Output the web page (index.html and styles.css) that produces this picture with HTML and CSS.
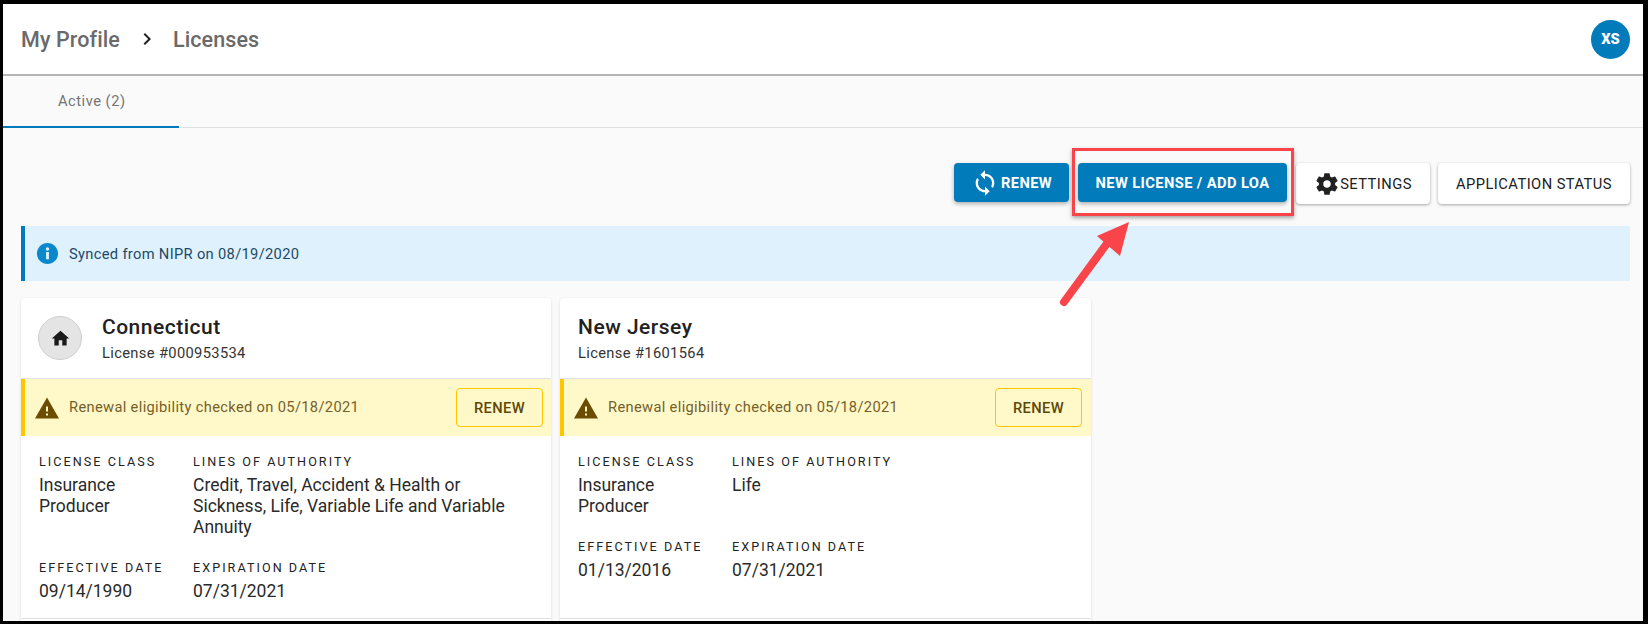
FILE: index.html
```html
<!DOCTYPE html>
<html lang="en">
<head>
<meta charset="utf-8">
<title>Licenses</title>
<link rel="stylesheet" href="styles.css">
</head>
<body>
<div class="frame">
  <header class="topbar">
    <div class="crumbs">
      <span class="crumb">My Profile</span>
      <svg class="crumb-sep" viewBox="0 0 24 24"><path d="M10 6L8.59 7.41 13.17 12l-4.58 4.59L10 18l6-6z"/></svg>
      <span class="crumb">Licenses</span>
    </div>
    <div class="avatar">XS</div>
  </header>
  <nav class="tabs">
    <div class="tab">Active (2)</div>
  </nav>
  <main class="content">
    <div class="actions">
      <button class="btn btn-primary btn-renew">
        <svg class="sync" viewBox="0 0 24 24"><path d="M12 4V1L8 5l4 4V6c3.31 0 6 2.69 6 6 0 1.01-.25 1.97-.7 2.8l1.46 1.46C19.54 15.03 20 13.57 20 12c0-4.42-3.58-8-8-8zm0 14c-3.31 0-6-2.69-6-6 0-1.01.25-1.97.7-2.8L5.24 7.74C4.46 8.97 4 10.43 4 12c0 4.42 3.58 8 8 8v3l4-4-4-4v3z"/></svg>
        RENEW
      </button>
      <button class="btn btn-primary btn-new">NEW LICENSE / ADD LOA</button>
      <button class="btn btn-plain btn-settings">
        <svg class="gear" viewBox="0 0 24 24"><path d="M19.43 12.98c.04-.32.07-.64.07-.98s-.03-.66-.07-.98l2.11-1.65c.19-.15.24-.42.12-.64l-2-3.46c-.12-.22-.39-.3-.61-.22l-2.49 1c-.52-.4-1.08-.73-1.69-.98l-.38-2.65C14.46 2.18 14.25 2 14 2h-4c-.25 0-.46.18-.49.42l-.38 2.65c-.61.25-1.17.59-1.69.98l-2.49-1c-.23-.09-.49 0-.61.22l-2 3.46c-.13.22-.07.49.12.64l2.11 1.65c-.04.32-.07.65-.07.98s.03.66.07.98l-2.11 1.65c-.19.15-.24.42-.12.64l2 3.46c.12.22.39.3.61.22l2.49-1c.52.4 1.08.73 1.69.98l.38 2.65c.03.24.24.42.49.42h4c.25 0 .46-.18.49-.42l.38-2.65c.61-.25 1.17-.59 1.69-.98l2.49 1c.23.09.49 0 .61-.22l2-3.46c.12-.22.07-.49-.12-.64l-2.11-1.65zM12 15.5c-1.93 0-3.5-1.57-3.5-3.5s1.57-3.5 3.5-3.5 3.5 1.57 3.5 3.5-1.57 3.5-3.5 3.5z"/></svg>
        SETTINGS
      </button>
      <button class="btn btn-plain btn-status">APPLICATION STATUS</button>
    </div>

    <div class="info-banner">
      <svg class="info-icon" viewBox="0 0 24 24"><path d="M12 1C5.92 1 1 5.92 1 12s4.92 11 11 11 11-4.92 11-11S18.08 1 12 1zm1.5 17h-3v-7.500h3V18zM12 9a1.800 1.800 0 1 1 0-3.600A1.800 1.800 0 0 1 12 9z"/></svg>
      <span>Synced from NIPR on 08/19/2020</span>
    </div>

    <div class="cards">
      <article class="card">
        <div class="card-head">
          <div class="home-badge">
            <svg class="home" viewBox="0 0 24 24"><path d="M10 20v-6h4v6h5v-8h3L12 3 2 12h3v8z"/></svg>
          </div>
          <div>
            <h2 class="state">Connecticut</h2>
            <div class="license-no">License #000953534</div>
          </div>
        </div>
        <div class="warn">
          <svg class="warn-icon" viewBox="0 0 24 24"><path d="M0 22.500h24L12 1.500 0 22.500zm13-3h-2v-2h2v2zm0-4h-2v-5h2v5z"/></svg>
          <span class="warn-text">Renewal eligibility checked on 05/18/2021</span>
          <button class="btn-outline">RENEW</button>
        </div>
        <div class="card-body">
          <div class="field">
            <div class="label">LICENSE CLASS</div>
            <div class="value">Insurance Producer</div>
          </div>
          <div class="field">
            <div class="label">LINES OF AUTHORITY</div>
            <div class="value">Credit, Travel, Accident &amp; Health or Sickness, Life, Variable Life and Variable Annuity</div>
          </div>
          <div class="field">
            <div class="label">EFFECTIVE DATE</div>
            <div class="value">09/14/1990</div>
          </div>
          <div class="field">
            <div class="label">EXPIRATION DATE</div>
            <div class="value">07/31/2021</div>
          </div>
        </div>
        <div class="card-foot"></div>
      </article>

      <article class="card">
        <div class="card-head">
          <div>
            <h2 class="state">New Jersey</h2>
            <div class="license-no">License #1601564</div>
          </div>
        </div>
        <div class="warn">
          <svg class="warn-icon" viewBox="0 0 24 24"><path d="M0 22.500h24L12 1.500 0 22.500zm13-3h-2v-2h2v2zm0-4h-2v-5h2v5z"/></svg>
          <span class="warn-text">Renewal eligibility checked on 05/18/2021</span>
          <button class="btn-outline">RENEW</button>
        </div>
        <div class="card-body">
          <div class="field">
            <div class="label">LICENSE CLASS</div>
            <div class="value">Insurance Producer</div>
          </div>
          <div class="field">
            <div class="label">LINES OF AUTHORITY</div>
            <div class="value">Life</div>
          </div>
          <div class="field">
            <div class="label">EFFECTIVE DATE</div>
            <div class="value">01/13/2016</div>
          </div>
          <div class="field">
            <div class="label">EXPIRATION DATE</div>
            <div class="value">07/31/2021</div>
          </div>
        </div>
        <div class="card-foot"></div>
      </article>
    </div>
  </main>

  <div class="callout-box"></div>
  <svg class="callout-arrow" viewBox="0 0 80 90">
    <line x1="6" y1="84" x2="53" y2="20" />
    <polygon points="71,4 62,38 39,18" />
  </svg>
</div>
</body>
</html>
```

FILE: styles.css
```css
* { box-sizing: border-box; }

html, body {
  margin: 0;
  height: 100%;
  background: #000;
  overflow: hidden;
}

.frame {
  position: absolute;
  left: 3px;
  top: 4px;
  width: 1640px;
  height: 617px;
  background: #fafafa;
  overflow: hidden;
  font-family: Roboto, "Liberation Sans", sans-serif;
  color: #212121;
}

/* top bar */
.topbar {
  display: flex;
  align-items: center;
  justify-content: space-between;
  height: 72px;
  padding: 0 13px 0 18px;
  background: #fff;
  border-bottom: 2px solid #b5b5b5;
}

.crumbs {
  display: flex;
  align-items: center;
  color: #6a6a6a;
}

.crumb {
  font-size: 21.5px;
  font-weight: 500;
  letter-spacing: 0.1px;
}

.crumb-sep {
  width: 24px;
  height: 24px;
  margin: 0 14.5px;
  fill: #212121;
}

.avatar {
  width: 39px;
  height: 39px;
  border-radius: 50%;
  background: #017bba;
  color: #fff;
  font-size: 14.7px;
  font-weight: 900;
  display: flex;
  align-items: center;
  justify-content: center;
}

/* tabs */
.tabs {
  height: 52px;
  border-bottom: 1px solid #e0e0e0;
}

.tab {
  width: 176px;
  height: 52px;
  padding: 15px 0 0 55px;
  font-size: 14.7px;
  line-height: 20px;
  letter-spacing: 0.5px;
  color: #757575;
  border-bottom: 2px solid #017bba;
}

/* page body */
.content {
  padding: 35px 13px 0 18px;
}

.actions {
  display: flex;
  justify-content: flex-end;
  align-items: flex-start;
  gap: 9px;
}

.btn {
  display: flex;
  align-items: center;
  justify-content: center;
  border: 0;
  border-radius: 4px;
  font-family: inherit;
  font-size: 14.7px;
  font-weight: 500;
  letter-spacing: 0.4px;
  padding: 0;
}

.btn-primary {
  height: 39px;
  background: #017bba;
  color: #fff;
  font-weight: 700;
  box-shadow: 0 2px 4px rgba(0, 0, 0, .3);
}

.btn-plain {
  height: 41px;
  background: #fff;
  color: #212121;
  font-weight: 400;
  letter-spacing: 0.45px;
  box-shadow: 0 1px 3px rgba(0, 0, 0, .35);
}

.btn-renew { width: 115px; gap: 2px; }
.btn-new { width: 209px; }
.btn-settings { width: 134px; }
.btn-status { width: 192px; margin-left: -1px; }

.sync {
  width: 28px;
  height: 28px;
  fill: #fff;
}

.gear {
  width: 26px;
  height: 26px;
  fill: #212121;
}

/* banner */
.info-banner {
  display: flex;
  align-items: center;
  height: 55px;
  margin-top: 22px;
  padding-left: 11px;
  background: #dff1fd;
  border-left: 4px solid #017bba;
  color: #1c4a66;
  font-size: 14.7px;
  letter-spacing: 0.32px;
}

.info-icon {
  width: 23px;
  height: 23px;
  margin-right: 10px;
  fill: #0a88cc;
}

/* cards */
.cards {
  display: flex;
  gap: 9px;
  margin-top: 17px;
}

.card {
  display: flex;
  flex-direction: column;
  width: 530px;
  background: #fff;
  border-radius: 4px 4px 0 0;
  box-shadow: 0 1px 3px rgba(0, 0, 0, .12);
}

.card + .card { width: 531px; }
.card + .card .warn { padding-right: 9px; }

.card-head {
  display: flex;
  align-items: center;
  height: 81px;
  padding: 0 18px;
  border-bottom: 1px solid #e0e0e8;
}

.home-badge {
  display: flex;
  align-items: center;
  justify-content: center;
  width: 44px;
  height: 44px;
  margin-left: -1px;
  margin-right: 20px;
  border-radius: 50%;
  background: #e4e4e4;
  border: 1px solid #cfcfcf;
}

.home {
  width: 21px;
  height: 21px;
  fill: #1a1a1a;
}

.state {
  margin: 0;
  font-size: 21px;
  font-weight: 500;
  line-height: 26px;
  letter-spacing: 0.5px;
  color: #212121;
}

.license-no {
  margin-top: 3px;
  font-size: 14.7px;
  line-height: 20px;
  letter-spacing: 0.35px;
  color: #333;
}

.warn {
  display: flex;
  align-items: center;
  height: 57px;
  padding: 0 8px 0 10px;
  background: #fff9c9;
  border-left: 4px solid #ffc600;
  color: #75602a;
  font-size: 14.7px;
}

.warn-icon {
  width: 24px;
  height: 24px;
  margin-right: 10px;
  fill: #6b4c00;
  flex: none;
}

.warn-text {
  flex: 1;
  letter-spacing: 0.33px;
  margin-top: -2px;
}

.btn-outline {
  width: 87px;
  height: 39px;
  background: transparent;
  border: 1px solid #ffc600;
  border-radius: 4px;
  color: #5f4708;
  font-family: inherit;
  font-size: 14.7px;
  font-weight: 500;
  letter-spacing: 0.4px;
  padding: 0;
}

.card-body {
  flex: 1;
  display: grid;
  grid-template-columns: 136px 1fr;
  grid-auto-rows: min-content;
  column-gap: 18px;
  row-gap: 22.5px;
  min-height: 182px;
  padding: 18px 40px 0 18px;
}

.label {
  font-size: 12.6px;
  line-height: 16px;
  font-weight: 400;
  letter-spacing: 2.05px;
  color: #222;
  white-space: nowrap;
}

.value {
  margin-top: 4.5px;
  font-size: 17.5px;
  line-height: 21px;
  color: #2a2a2a;
}

.card-foot {
  height: 30px;
  flex: none;
  border-top: 1px solid #e0e0e0;
}

/* annotation */
.callout-box {
  position: absolute;
  left: 1069px;
  top: 144px;
  width: 222px;
  height: 68px;
  border: 3px solid #f9444a;
  box-shadow: 0 2px 4px rgba(0, 0, 0, .35);
}

.callout-arrow {
  position: absolute;
  left: 1055px;
  top: 214px;
  width: 80px;
  height: 90px;
  overflow: visible;
}

.callout-arrow line {
  stroke: #f9444a;
  stroke-width: 8;
  stroke-linecap: round;
}

.callout-arrow polygon {
  fill: #f9444a;
}
```
